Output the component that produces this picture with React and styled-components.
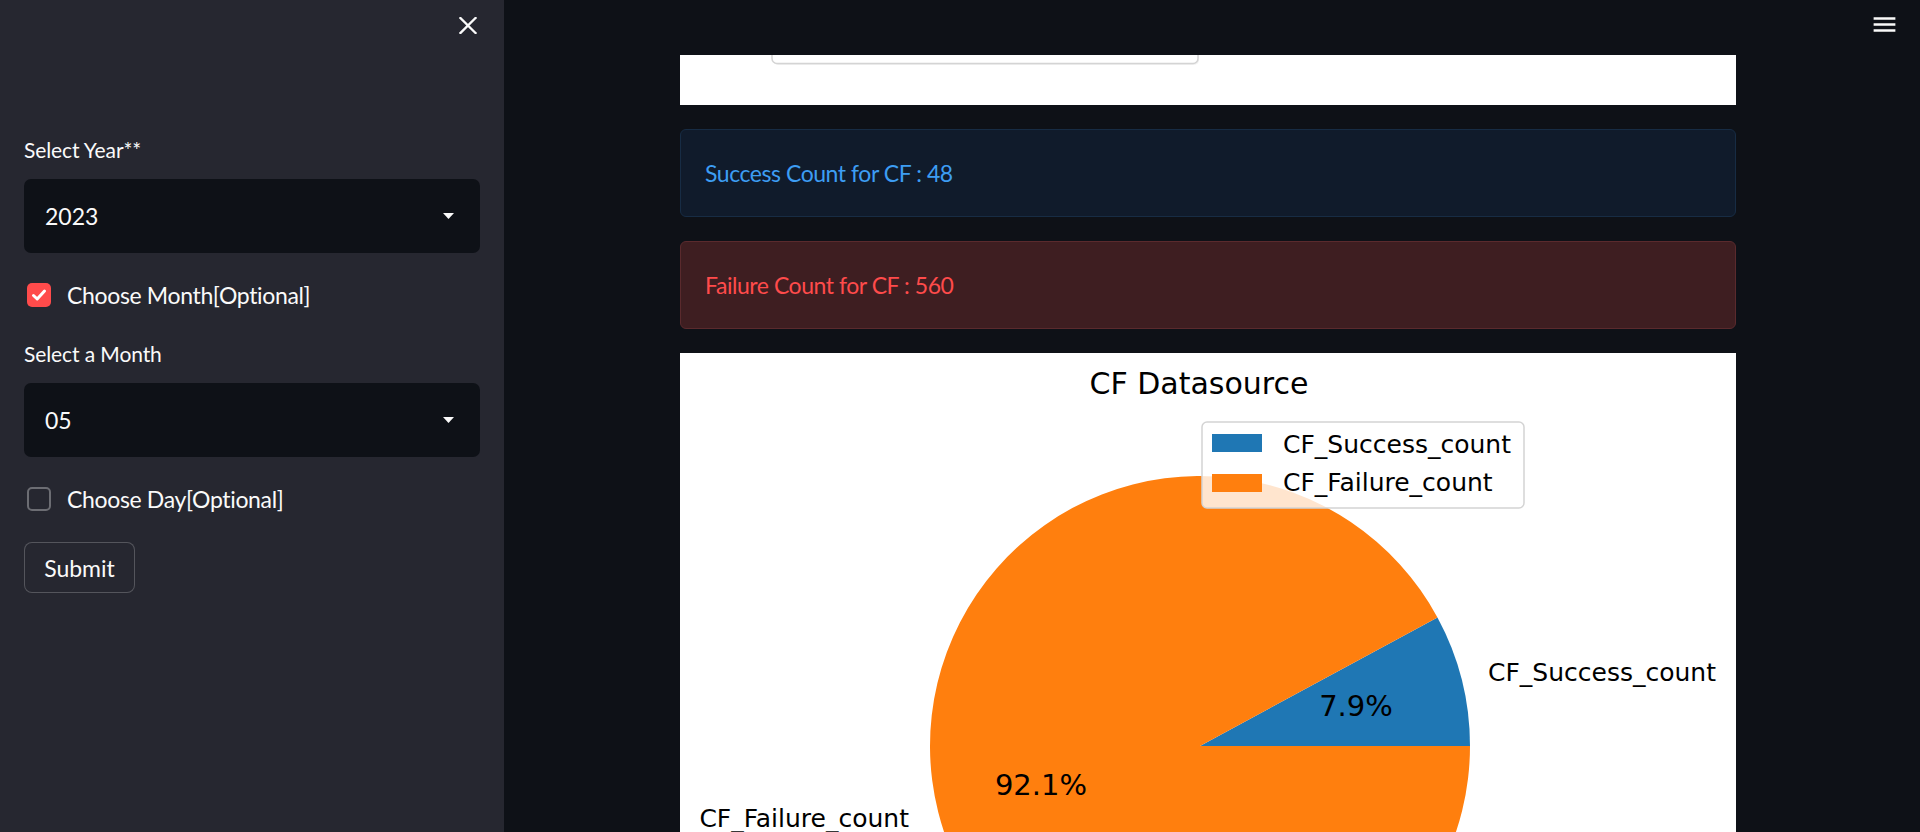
import React from 'react';
import styled, { createGlobalStyle } from 'styled-components';
import { MdMenu } from 'react-icons/md';

const GlobalStyle = createGlobalStyle`
  html, body {
    margin: 0;
    padding: 0;
    background: #0e1117;
    overflow: hidden;
  }
  * {
    box-sizing: border-box;
  }
`;

const Page = styled.div`
  display: flex;
  height: 832px;
  font-family: 'Lato', 'Liberation Sans', sans-serif;
  color: #fafafa;
  background: #0e1117;
`;

const Sidebar = styled.aside`
  width: 504px;
  flex-shrink: 0;
  background: #262730;
  padding: 0 24px;
  display: flex;
  flex-direction: column;
`;

const CloseRow = styled.div`
  height: 50px;
  display: flex;
  justify-content: flex-end;
  align-items: center;
`;

const IconButton = styled.button`
  width: 24px;
  height: 24px;
  display: flex;
  align-items: center;
  justify-content: center;
  padding: 0;
  border: none;
  background: transparent;
  color: #fafafa;
  cursor: pointer;
`;

const Form = styled.div`
  display: flex;
  flex-direction: column;
  padding-top: 85px;
`;

const Label = styled.div`
  font-size: 21px;
  line-height: 30px;
  color: #fafafa;
  margin-top: ${(p) => p.$top || 0}px;
  margin-bottom: 14px;
  letter-spacing: -0.1px;
`;

const Select = styled.div`
  height: 74px;
  border-radius: 7px;
  background: #0e1117;
  display: flex;
  align-items: center;
  justify-content: space-between;
  padding: 0 26px 0 21px;
  font-size: 23px;
  color: #fafafa;
  cursor: pointer;
`;

const CheckRow = styled.label`
  height: 36px;
  margin-top: 24px;
  display: flex;
  align-items: center;
  gap: 16px;
  padding-left: 3px;
  font-size: 23px;
  letter-spacing: -0.35px;
  color: #fafafa;
  cursor: pointer;
`;

const Box = styled.span`
  width: 24px;
  height: 24px;
  border-radius: 5px;
  display: flex;
  align-items: center;
  justify-content: center;
  background: ${(p) => (p.$checked ? '#ff4b4b' : 'transparent')};
  border: ${(p) => (p.$checked ? 'none' : '2px solid #6c6d73')};
`;

const SubmitButton = styled.button`
  align-self: flex-start;
  margin-top: 25px;
  width: 111px;
  height: 51px;
  border-radius: 8px;
  border: 1px solid rgba(250, 250, 250, 0.22);
  background: #262730;
  color: #fafafa;
  font-family: inherit;
  font-size: 23px;
  cursor: pointer;
`;

const Main = styled.main`
  flex: 1;
  display: flex;
  flex-direction: column;
  overflow: hidden;
`;

const Header = styled.header`
  height: 55px;
  flex-shrink: 0;
  display: flex;
  justify-content: flex-end;
  align-items: center;
  padding: 0 21px 6px 0;
  color: #fafafa;
`;

const Content = styled.div`
  width: 1056px;
  margin-left: 176px;
  display: flex;
  flex-direction: column;
  gap: 24px;
`;

const ChartTail = styled.div`
  height: 50px;
  background: #ffffff;
`;

const Alert = styled.div`
  height: 88px;
  border-radius: 6px;
  padding: 0 24px;
  display: flex;
  align-items: center;
  font-size: 23px;
  letter-spacing: -0.45px;
  background: ${(p) => (p.$kind === 'error' ? '#3e1e21' : '#101b2b')};
  border: 1px solid ${(p) => (p.$kind === 'error' ? '#5a2a2d' : '#172c44')};
  color: ${(p) => (p.$kind === 'error' ? '#ff4b4b' : '#3d9df3')};
`;

const ChartCard = styled.div`
  height: 520px;
  background: #ffffff;
  flex-shrink: 0;
`;

const ChartText = styled.text`
  font-family: 'DejaVu Sans', sans-serif;
  fill: #000000;
`;

const CloseIcon = () => (
  <svg width="18" height="17" viewBox="0 0 18 17">
    <path d="M1.5 1 L16.5 16 M16.5 1 L1.5 16" stroke="#fafafa" strokeWidth="2.3" strokeLinecap="square" />
  </svg>
);

const Caret = () => (
  <svg width="11" height="6" viewBox="0 0 11 6">
    <polygon points="0,0 11,0 5.5,6" fill="#fafafa" />
  </svg>
);

const Check = () => (
  <svg width="18" height="18" viewBox="0 0 18 18">
    <polyline
      points="3.5,9.5 7.2,13 14.5,5"
      fill="none"
      stroke="#ffffff"
      strokeWidth="3"
      strokeLinecap="round"
      strokeLinejoin="round"
    />
  </svg>
);

const Checkbox = ({ checked, children }) => (
  <CheckRow>
    <Box $checked={checked}>{checked && <Check />}</Box>
    {children}
  </CheckRow>
);

const PieChart = () => {
  const cx = 520;
  const cy = 393;
  const r = 270;
  const frac = 48 / 608;
  const a = frac * 2 * Math.PI;
  const ex = cx + r * Math.cos(a);
  const ey = cy - r * Math.sin(a);
  return (
    <svg width="1056" height="520" viewBox="0 0 1056 520">
      <ChartText x="519" y="41" fontSize="30" textAnchor="middle">
        CF Datasource
      </ChartText>
      <path d={`M${cx},${cy} L${cx + r},${cy} A${r},${r} 0 0 0 ${ex},${ey} Z`} fill="#1f77b4" />
      <path d={`M${cx},${cy} L${ex},${ey} A${r},${r} 0 1 0 ${cx + r},${cy} Z`} fill="#ff7f0e" />
      <ChartText x="676" y="363" fontSize="29" textAnchor="middle">7.9%</ChartText>
      <ChartText x="361" y="442" fontSize="29" textAnchor="middle">92.1%</ChartText>
      <ChartText x="808" y="328" fontSize="25">CF_Success_count</ChartText>
      <ChartText x="229" y="474" fontSize="25" textAnchor="end">CF_Failure_count</ChartText>
      <rect x="522" y="69" width="322" height="86" rx="5" fill="rgba(255,255,255,0.8)" stroke="#d4d4d4" strokeWidth="1.5" />
      <rect x="532" y="81" width="50" height="18" fill="#1f77b4" />
      <rect x="532" y="121" width="50" height="18" fill="#ff7f0e" />
      <ChartText x="603" y="100" fontSize="25">CF_Success_count</ChartText>
      <ChartText x="603" y="138" fontSize="25">CF_Failure_count</ChartText>
    </svg>
  );
};

const LegendTail = () => (
  <svg width="1056" height="50" viewBox="0 0 1056 50">
    <rect x="93" y="-40" width="426" height="50" rx="5" fill="#e6e6e6" opacity="0.5" />
    <rect x="92" y="-40" width="426" height="48.5" rx="5" fill="#ffffff" stroke="#d4d4d4" strokeWidth="1.5" />
  </svg>
);

const App = () => {
  return (
    <>
      <GlobalStyle />
      <Page>
        <Sidebar>
          <CloseRow>
            <IconButton aria-label="Close sidebar">
              <CloseIcon />
            </IconButton>
          </CloseRow>
          <Form>
            <Label>Select Year**</Label>
            <Select>
              <span>2023</span>
              <Caret />
            </Select>
            <Checkbox checked>Choose Month[Optional]</Checkbox>
            <Label $top={26}>Select a Month</Label>
            <Select>
              <span>05</span>
              <Caret />
            </Select>
            <Checkbox>Choose Day[Optional]</Checkbox>
            <SubmitButton>Submit</SubmitButton>
          </Form>
        </Sidebar>
        <Main>
          <Header>
            <MdMenu size={29} />
          </Header>
          <Content>
            <ChartTail>
              <LegendTail />
            </ChartTail>
            <Alert>Success Count for CF : 48</Alert>
            <Alert $kind="error">Failure Count for CF : 560</Alert>
            <ChartCard>
              <PieChart />
            </ChartCard>
          </Content>
        </Main>
      </Page>
    </>
  );
};

export default App;
